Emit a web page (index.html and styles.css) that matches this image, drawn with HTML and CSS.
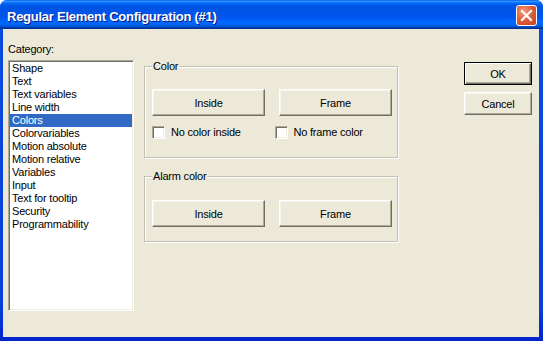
FILE: index.html
```html
<!DOCTYPE html>
<html lang="en">
	<head>
	<title>Regular Element Configuration (#1)</title>
	<link rel="stylesheet" href="styles.css">
	</head>

	<body>
	<div class="window">
		<!-- title bar -->
		<div class="titlebar">
			<span class="title">Regular Element Configuration (#1)</span>
			<button type="button" class="close" aria-label="Close">
				<svg width="19" height="19" viewBox="0 0 19 19">
					<path d="M5 5 L14 14 M14 5 L5 14" stroke="#fff" stroke-width="2.2" stroke-linecap="square"/>
				</svg>
			</button>
		</div>

		<div class="client">
			<!-- category list -->
			<div class="category">
				<div class="caption">Category:</div>
				<ul class="listbox">
					<li>Shape</li>
					<li>Text</li>
					<li>Text variables</li>
					<li>Line width</li>
					<li class="selected">Colors</li>
					<li>Colorvariables</li>
					<li>Motion absolute</li>
					<li>Motion relative</li>
					<li>Variables</li>
					<li>Input</li>
					<li>Text for tooltip</li>
					<li>Security</li>
					<li>Programmability</li>
				</ul>
			</div>

			<!-- page: colors -->
			<div class="page">
				<div class="group group-color">
					<span class="group-title">Color</span>
					<div class="btn-row">
						<button type="button" class="btn wide">Inside</button>
						<button type="button" class="btn wide">Frame</button>
					</div>
					<div class="check-row">
						<label class="check"><span class="box"></span>No color inside</label>
						<label class="check"><span class="box"></span>No frame color</label>
					</div>
				</div>

				<div class="group group-alarm">
					<span class="group-title">Alarm color</span>
					<div class="btn-row">
						<button type="button" class="btn wide">Inside</button>
						<button type="button" class="btn wide">Frame</button>
					</div>
				</div>
			</div>

			<!-- dialog buttons -->
			<div class="actions">
				<button type="button" class="btn small default">OK</button>
				<button type="button" class="btn small">Cancel</button>
			</div>
		</div>
	</div>
	</body>
</html>
```

FILE: styles.css
```css
body {
	margin: 0;
	background: #fff;
	font: normal 11px "Liberation Sans", Arial, sans-serif;
	letter-spacing: -0.2px;
	color: #000;
}

.window {
	width: 543px;
	height: 341px;
	box-sizing: border-box;
	border-radius: 7px 7px 0 0;
	background: linear-gradient(to bottom, #0a4ce0 0%, #083fd8 90%, #0024cc 100%);
	overflow: hidden;
}

.titlebar {
	display: flex;
	justify-content: space-between;
	align-items: flex-start;
	height: 29px;
	padding: 0 6px 0 7px;
	box-sizing: border-box;
	background: linear-gradient(to bottom, #0058ee 0%, #3593ff 4%, #288eff 6%, #127dff 8%, #036ffc 10%, #0262ee 14%, #0057e5 20%, #0054e3 24%, #0055eb 56%, #005bf5 66%, #026afe 76%, #0062ef 86%, #0052d6 92%, #0040ab 94%, #003092 100%);
}

.title {
	padding-top: 10px;
	font: bold 13px "Liberation Sans", Arial, sans-serif;
	line-height: 13px;
	letter-spacing: -0.25px;
	color: #fff;
	text-shadow: 1px 1px 0 #0a1883;
}

.close {
	width: 21px;
	height: 21px;
	margin-top: 5px;
	padding: 0;
	box-sizing: border-box;
	border: 1px solid #fff;
	border-radius: 3px;
	background: radial-gradient(circle at 35% 30%, #f0a080 0%, #e0603c 45%, #c83c18 100%);
	display: flex;
	align-items: center;
	justify-content: center;
}

.client {
	display: flex;
	align-items: flex-start;
	height: 308px;
	margin: 0 4px 4px 3px;
	padding: 14px 0 0 5px;
	box-sizing: border-box;
	background: #ece9d8;
}

.caption {
	line-height: 13px;
	margin-bottom: 4px;
}

.listbox {
	width: 126px;
	height: 251px;
	margin: 0;
	padding: 1px;
	box-sizing: border-box;
	list-style: none;
	background: #fff;
	border: 1px solid;
	border-color: #aca899 #fff #fff #aca899;
	box-shadow: inset 1px 1px 0 #716f64, inset -1px -1px 0 #f1efe2;
}

.listbox li {
	height: 13px;
	line-height: 13px;
	padding-left: 2px;
	white-space: nowrap;
}

.listbox li.selected {
	background: #316ac5;
	color: #fff;
}

.page {
	width: 254px;
	margin-left: 10px;
	padding-top: 23px;
}

.group {
	position: relative;
	box-sizing: border-box;
	border: 1px solid #c3c0b1;
	box-shadow: inset 1px 1px 0 #fff, 1px 1px 0 #fff;
	padding-left: 7px;
}

.group-color {
	height: 92px;
	padding-top: 22px;
}

.group-alarm {
	height: 66px;
	margin-top: 18px;
	padding-top: 23px;
}

.group-title {
	position: absolute;
	top: -7px;
	left: 7px;
	padding: 0 1px;
	line-height: 13px;
	background: #ece9d8;
}

.btn-row {
	display: flex;
	gap: 14px;
}

.btn {
	padding: 0;
	box-sizing: border-box;
	font: normal 11px "Liberation Sans", Arial, sans-serif;
	letter-spacing: -0.2px;
	color: #000;
	background: #ece9d8;
	border: 1px solid;
	border-color: #fff #716f64 #716f64 #fff;
	box-shadow: inset -1px -1px 0 #aca899, inset 1px 1px 0 #f4f3ee;
}

.btn.wide {
	width: 113px;
	height: 27px;
}

.btn.small {
	width: 68px;
	height: 23px;
}

.btn.default {
	border: 1px solid #000;
	box-shadow: inset 1px 1px 0 #fff, inset -1px -1px 0 #716f64, inset -2px -2px 0 #aca899;
}

.check-row {
	display: flex;
	margin-top: 10px;
}

.check {
	display: flex;
	align-items: center;
	gap: 6px;
	width: 127px;
	line-height: 13px;
	white-space: nowrap;
}

.box {
	width: 13px;
	height: 13px;
	box-sizing: border-box;
	background: #fff;
	border: 1px solid;
	border-color: #aca899 #fff #fff #aca899;
	box-shadow: inset 1px 1px 0 #716f64, inset -1px -1px 0 #f1efe2;
}

.actions {
	display: flex;
	flex-direction: column;
	gap: 7px;
	margin-left: 66px;
	padding-top: 19px;
}
```
